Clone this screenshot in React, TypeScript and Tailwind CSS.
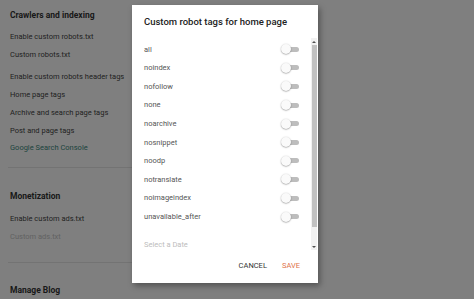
import React from "react";

const tags = [
  "all",
  "noindex",
  "nofollow",
  "none",
  "noarchive",
  "nosnippet",
  "noodp",
  "notranslate",
  "noimageindex",
  "unavailable_after",
];

function Toggle() {
  return (
    <div className="relative h-[10px] w-[18px]">
      <div className="absolute right-0 top-[2.5px] h-[5px] w-[12px] rounded-full bg-[#bdbdbd]" />
      <div className="absolute left-0 top-0 h-[10px] w-[10px] rounded-full bg-[#fafafa] shadow-[0_0.5px_1.5px_rgba(0,0,0,0.45)]" />
    </div>
  );
}

function Scrollbar() {
  return (
    <div className="flex w-[6px] flex-col items-center bg-[#f1f1f1]">
      <div className="flex h-[7px] items-center justify-center">
        <div className="h-0 w-0 border-x-[2px] border-b-[2px] border-x-transparent border-b-[#505050]" />
      </div>
      <div className="h-[182px] w-[5px] bg-[#c1c1c1]" />
      <div className="flex-1" />
      <div className="flex h-[7px] items-center justify-center">
        <div className="h-0 w-0 border-x-[2px] border-t-[2px] border-x-transparent border-t-[#505050]" />
      </div>
    </div>
  );
}

function Item({ label, className = "" }: { label: string; className?: string }) {
  return (
    <div className={`flex h-[18px] items-center text-[7.5px] text-[#444] ${className}`}>
      {label}
    </div>
  );
}

export default function App() {
  return (
    <div
      className="relative h-[299px] w-[474px] overflow-hidden bg-white"
      style={{ fontFamily: "Roboto, 'Liberation Sans', sans-serif" }}
    >
      {/* Settings page behind */}
      <div className="flex w-[140px] flex-col pl-[10px] pt-[6px]">
        <div className="flex h-[18px] items-center text-[8.5px] font-bold text-[#333]">
          Crawlers and indexing
        </div>
        <div className="mt-[4px]" />
        <Item label="Enable custom robots.txt" />
        <Item label="Custom robots.txt" />
        <Item label="Enable custom robots header tags" className="mt-[4px]" />
        <Item label="Home page tags" />
        <Item label="Archive and search page tags" />
        <Item label="Post and page tags" />
        <div className="flex h-[16px] items-center text-[7.5px] text-[#3d8a80]">
          Google Search Console
        </div>
        <div className="-ml-[2px] mt-[11px] border-t border-[#e6e6e6]" />
        <div className="mt-[19px] flex h-[18px] items-center text-[8.5px] font-bold text-[#333]">
          Monetization
        </div>
        <Item label="Enable custom ads.txt" className="mt-[5px]" />
        <Item label="Custom ads.txt" className="text-[#c4c4c4]" />
        <div className="-ml-[2px] mt-[16px] border-t border-[#e6e6e6]" />
        <div className="mt-[18px] flex h-[18px] items-center text-[8.5px] font-bold text-[#333]">
          Manage Blog
        </div>
      </div>

      {/* Backdrop */}
      <div className="absolute inset-0 bg-black/50" />

      {/* Dialog */}
      <div className="absolute left-[132px] top-[5px] flex h-[278px] w-[186px] flex-col bg-white shadow-[2px_3px_6px_rgba(0,0,0,0.35)]">
        <div className="pl-[12px] pt-[11px] text-[9.5px] font-medium leading-[12px] text-[#222]">
          Custom robot tags for home page
        </div>
        <div className="mt-[10px] flex h-[212px]">
          <div className="flex-1 overflow-hidden pl-[12px] pr-[12px] pt-[2px]">
            {tags.map((t) => (
              <div key={t} className="flex h-[18.6px] items-center justify-between">
                <span className="text-[7.5px] text-[#555]">{t}</span>
                <Toggle />
              </div>
            ))}
            <div className="mt-[13px] text-[7.5px] leading-[12px] text-[#bdbdbd]">
              Select a Date
            </div>
          </div>
          <Scrollbar />
          <div className="w-[1px]" />
        </div>
        <div className="flex flex-1 items-center justify-end gap-[15px] pb-[2px] pr-[18px]">
          <span className="text-[7.5px] text-[#333]">CANCEL</span>
          <span className="text-[7.5px] text-[#e0734a]">SAVE</span>
        </div>
      </div>
    </div>
  );
}
